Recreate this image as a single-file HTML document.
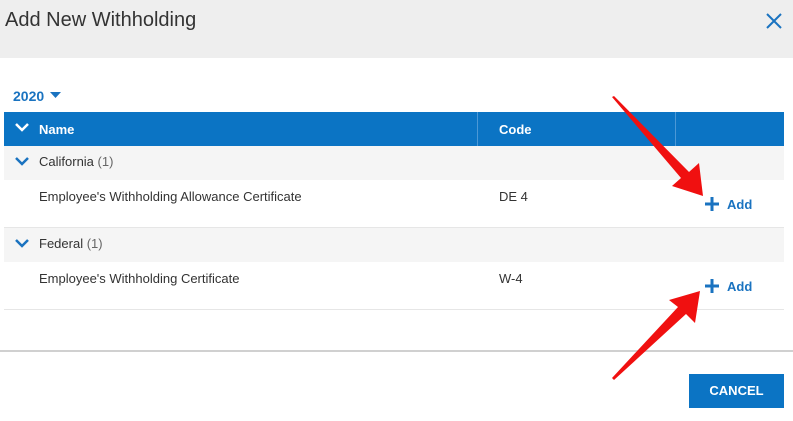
<!DOCTYPE html><html><head><style>
body{margin:0;width:793px;height:421px;background:#fff;font-family:"Liberation Sans",sans-serif;position:relative;overflow:hidden}
.a{position:absolute}
.hdr{left:0;top:0;width:793px;height:58px;background:#eeeeee}
.t{font-size:13px;color:#333}
</style></head><body>
<div class="a hdr"></div>
<div class="a" style="left:5px;top:9px;font-size:20px;color:#333">Add New Withholding</div>
<svg class="a" style="left:765px;top:12px" width="18" height="18"><path d="M2 2L16 16M16 2L2 16" stroke="#1a73c0" stroke-width="2"/></svg>
<div class="a" style="left:13px;top:88px;font-size:14px;font-weight:bold;color:#1a73c0">2020</div>
<svg class="a" style="left:50px;top:92px" width="12" height="8"><path d="M0 0H11L5.5 6Z" fill="#1a73c0"/></svg>
<div class="a" style="left:4px;top:112px;width:780px;height:34px;background:#0b74c4"></div>
<div class="a" style="left:477px;top:112px;width:1px;height:34px;background:#4c98d6"></div>
<div class="a" style="left:675px;top:112px;width:1px;height:34px;background:#4c98d6"></div>
<svg class="a" style="left:15px;top:123px" width="14" height="10"><path d="M1 1L7 7L13 1" stroke="#fff" stroke-width="2.5" fill="none"/></svg>
<div class="a" style="left:39px;top:122px;font-size:13px;font-weight:bold;color:#fff">Name</div>
<div class="a" style="left:499px;top:122px;font-size:13px;font-weight:bold;color:#fff">Code</div>
<div class="a" style="left:4px;top:146px;width:780px;height:34px;background:#f5f5f5"></div>
<svg class="a" style="left:15px;top:157px" width="14" height="10"><path d="M1 1L7 7L13 1" stroke="#1a73c0" stroke-width="2.5" fill="none"/></svg>
<div class="a t" style="left:39px;top:154px">California <span style="color:#666">(1)</span></div>
<div class="a t" style="left:39px;top:189px">Employee's Withholding Allowance Certificate</div>
<div class="a t" style="left:499px;top:189px">DE 4</div>
<div class="a" style="left:4px;top:227px;width:780px;height:1px;background:#e6e6e6"></div>
<div class="a" style="left:4px;top:228px;width:780px;height:34px;background:#f5f5f5"></div>
<svg class="a" style="left:15px;top:239px" width="14" height="10"><path d="M1 1L7 7L13 1" stroke="#1a73c0" stroke-width="2.5" fill="none"/></svg>
<div class="a t" style="left:39px;top:236px">Federal <span style="color:#666">(1)</span></div>
<div class="a t" style="left:39px;top:271px">Employee's Withholding Certificate</div>
<div class="a t" style="left:499px;top:271px">W-4</div>
<div class="a" style="left:4px;top:309px;width:780px;height:1px;background:#e6e6e6"></div>
<svg class="a" style="left:705px;top:197px" width="14" height="14"><path d="M7 0V14M0 7H14" stroke="#1a73c0" stroke-width="3"/></svg>
<div class="a" style="left:727px;top:197px;font-size:13px;font-weight:bold;color:#1a73c0">Add</div>
<svg class="a" style="left:705px;top:279px" width="14" height="14"><path d="M7 0V14M0 7H14" stroke="#1a73c0" stroke-width="3"/></svg>
<div class="a" style="left:727px;top:279px;font-size:13px;font-weight:bold;color:#1a73c0">Add</div>
<div class="a" style="left:0;top:350px;width:793px;height:2px;background:#d0d0d0"></div>
<div class="a" style="left:689px;top:374px;width:95px;height:34px;background:#0b74c4;color:#fff;font-size:13px;font-weight:bold;text-align:center;line-height:34px">CANCEL</div>
<svg class="a" style="left:0;top:0" width="793" height="421">
<polygon points="612,97 614,96 689,172 699,163 703,196 672,186 681,178" fill="#f01010"/>
<polygon points="612,378 614,380 686,314 695,323 700,291 669,300 678,307" fill="#f01010"/>
</svg>
</body></html>
